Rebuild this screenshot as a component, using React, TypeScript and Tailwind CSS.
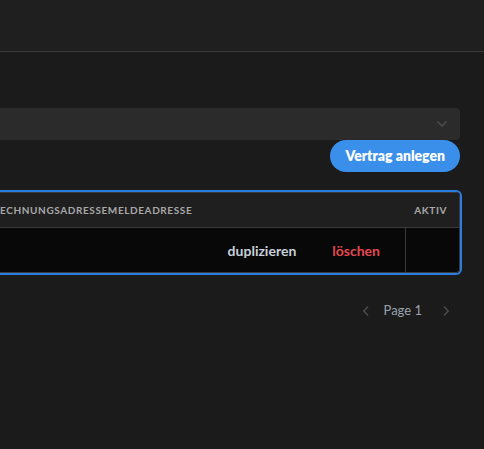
import React from "react";

export default function App() {
  return (
    <div className="w-[484px] h-[449px] overflow-hidden bg-[#1b1b1b] text-white" style={{ fontFamily: "Lato, 'Noto Sans', sans-serif" }}>
      <div className="h-[52px] bg-[#1f1f1f] border-b border-[#3a3a3a]" />
      <div className="pr-[24px] pt-[56px] flex flex-col items-end">
        <div className="w-[520px] shrink-0 h-[32px] rounded-[4px] bg-[#2b2b2b] flex items-center justify-end pr-[12px]">
          <svg width="12" height="8" viewBox="0 0 12 8" fill="none">
            <path d="M1.5 1.5 L6 6 L10.5 1.5" stroke="#4a4a4a" strokeWidth="1.6" />
          </svg>
        </div>
        <button className="h-[32px] px-[15px] rounded-full bg-[#3a8fea] text-white text-[14px] font-extrabold leading-none">
          Vertrag anlegen
        </button>
      </div>
      <div className="flex justify-end pr-[24px] mt-[20px]">
        <div className="shrink-0 w-[620px] rounded-[4px] border border-[#3a3a3a] ring-2 ring-[#2a7de1]">
          <div className="h-[35px] flex items-center bg-[#1f1f1f] border-b border-[#3a3a3a] text-[10px] font-bold tracking-[0.6px] text-[#a8a8a8]">
            <div className="flex-1 pl-[152px] whitespace-nowrap">RECHNUNGSADRESSEMELDEADRESSE</div>
            <div className="pr-[12px]">AKTIV</div>
          </div>
          <div className="h-[44px] flex bg-[#080808] rounded-b-[4px]">
            <div className="flex-1 flex items-center justify-end gap-[36px] pr-[25px] text-[14px] font-bold">
              <span className="text-[#c9d1dc]">duplizieren</span>
              <span className="text-[#e5484d]">löschen</span>
            </div>
            <div className="w-[54px] border-l border-[#3a3a3a]" />
          </div>
        </div>
      </div>
      <div className="flex justify-end items-center pr-[34px] mt-[28px] h-[20px] text-[13px] text-[#9aa3ad]">
        <svg width="8" height="12" viewBox="0 0 8 12" fill="none" className="mr-[14px]">
          <path d="M6 1.5 L1.8 6 L6 10.5" stroke="#4a4a4a" strokeWidth="1.6" />
        </svg>
        <span>Page 1</span>
        <svg width="8" height="12" viewBox="0 0 8 12" fill="none" className="ml-[20px]">
          <path d="M2 1.5 L6.2 6 L2 10.5" stroke="#4a4a4a" strokeWidth="1.6" />
        </svg>
      </div>
    </div>
  );
}
